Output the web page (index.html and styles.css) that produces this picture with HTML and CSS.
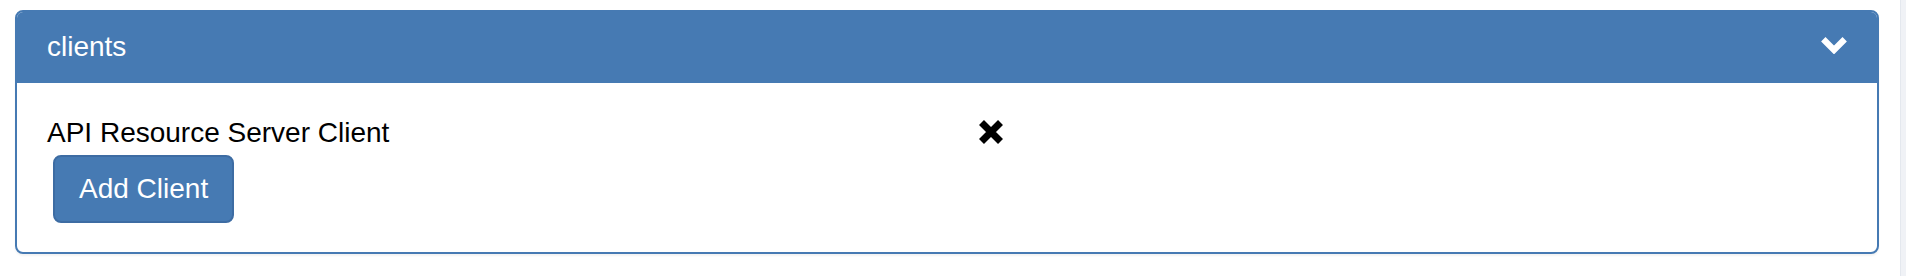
FILE: index.html
```html
<!DOCTYPE html>
<html>
<head>
<meta charset="utf-8">
<title>clients</title>
<link rel="stylesheet" href="styles.css">
</head>
<body>
<div class="page">
  <div class="panel">
    <div class="panel-heading">
      <h3 class="panel-title">clients</h3>
      <svg class="chevron" width="26" height="17" viewBox="0 0 26 17"><polyline points="2.3,2.3 13,13 23.7,2.3" fill="none" stroke="#fff" stroke-width="6.2" stroke-linejoin="miter"/></svg>
    </div>
    <div class="panel-body">
      <div class="client-row">
        <span class="client-name">API Resource Server Client</span>
        <svg class="remove" width="24" height="24" viewBox="0 0 24 24"><path d="M2.5 2.5 L21.5 21.5 M21.5 2.5 L2.5 21.5" fill="none" stroke="#000" stroke-width="7"/></svg>
      </div>
      <button class="btn">Add Client</button>
    </div>
  </div>
</div>
<div class="scrollbar"></div>
</body>
</html>
```
FILE: styles.css
```css
html, body {
  margin: 0;
  padding: 0;
  background: #fff;
}
body {
  display: flex;
  min-height: 276px;
  font-family: "Liberation Sans", Arial, Helvetica, sans-serif;
  color: #000;
}
.page {
  flex: 1;
  padding: 10px 21px 0 15px;
}
.scrollbar {
  width: 5px;
  background: #f0f2f6;
  border-left: 1px solid #e4e8ee;
}
.panel {
  border: 2px solid #467ab3;
  border-radius: 8px;
  box-shadow: 0 2px 2px rgba(0, 0, 0, 0.05);
  background: #fff;
}
.panel-heading {
  background: #467ab3;
  border-radius: 6px 6px 0 0;
  padding: 20px 30px;
  display: flex;
  justify-content: space-between;
  align-items: flex-start;
}
.panel-title {
  margin: 0;
  font-size: 28px;
  line-height: 1.1;
  font-weight: normal;
  color: #fff;
}
.chevron {
  display: block;
  margin-top: 5px;
}
.panel-body {
  padding: 30px 30px 29px;
}
.client-row {
  display: grid;
  grid-template-columns: 932px 24px;
  font-size: 28px;
  line-height: 40px;
}
.remove {
  display: block;
  margin-top: 7px;
}
.btn {
  display: block;
  margin: 2px 0 0 6px;
  font-family: "Liberation Sans", Arial, Helvetica, sans-serif;
  font-size: 28px;
  line-height: 40px;
  padding: 12px 24px;
  color: #fff;
  background: #467ab3;
  border: 2px solid #3d6ca3;
  border-radius: 8px;
}
```
